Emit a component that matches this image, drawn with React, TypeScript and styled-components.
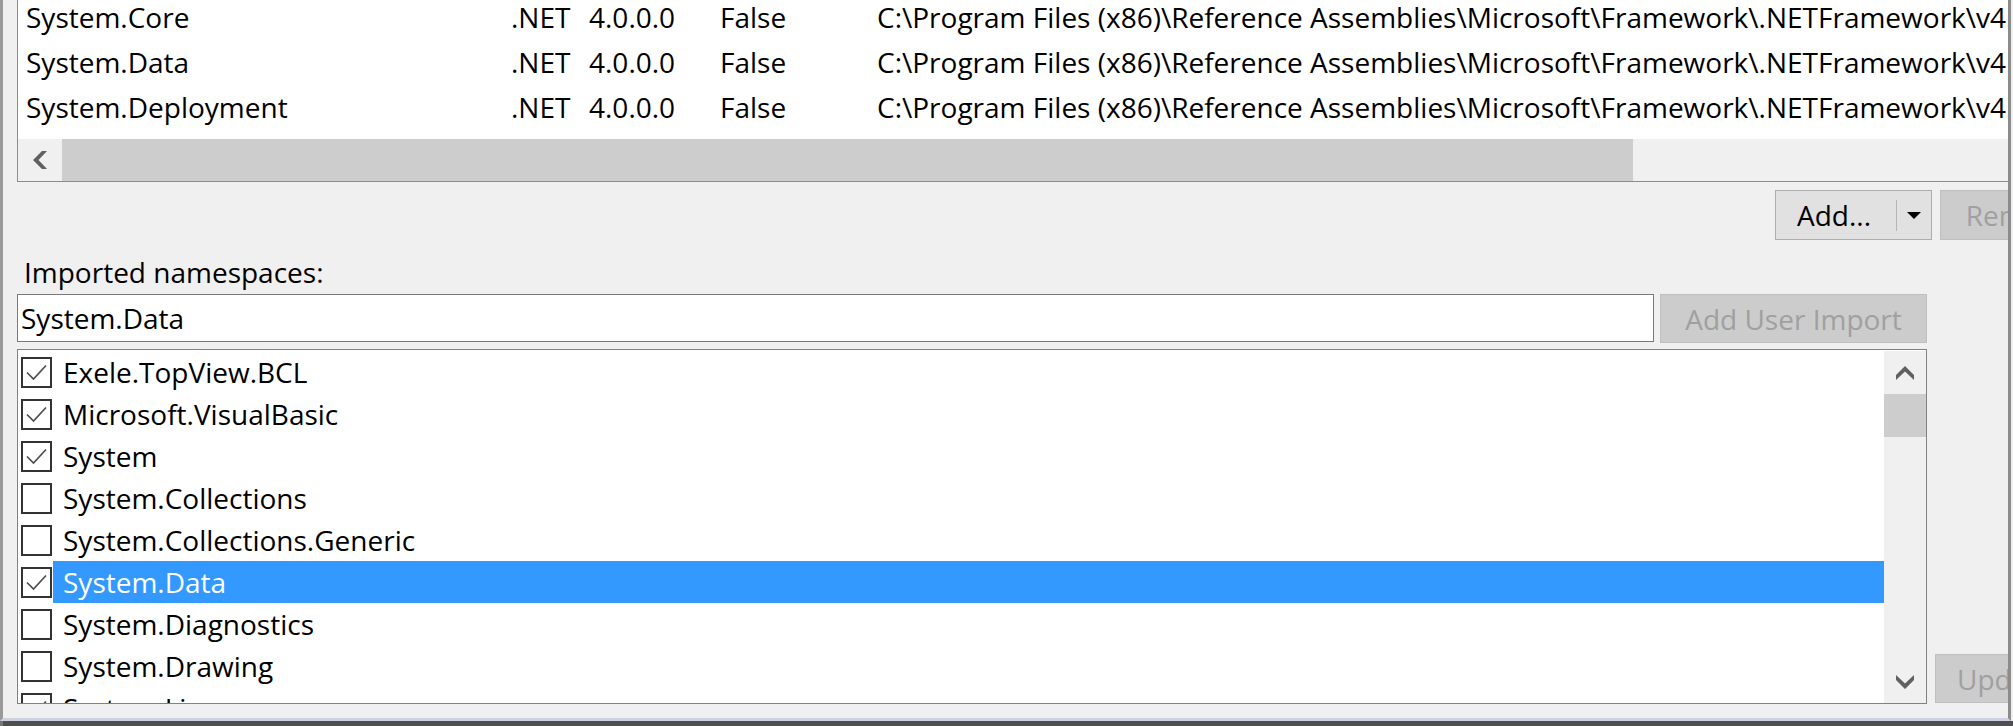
import styled, { createGlobalStyle } from "styled-components";

const GlobalStyle = createGlobalStyle`
  html, body {
    margin: 0;
    padding: 0;
    background: #f0f0f0;
    overflow: hidden;
  }
  body {
    font-family: "Segoe UI", "Open Sans", "Noto Sans", sans-serif;
  }
`;

const Screen = styled.div`
  width: 2013px;
  height: 726px;
  display: flex;
  flex-direction: column;
  background: #f0f0f0;
  overflow: hidden;
  font-size: 28px;
  color: #000;
`;

const Window = styled.div`
  flex: none;
  box-sizing: border-box;
  width: 2011px;
  height: 721px;
  background: #f0f0f0;
  border-left: 3px solid #9a9a9a;
  border-right: 3px solid #8c8c8c;
  border-bottom: 3px solid #cdd1e1;
  overflow: hidden;
`;

const BottomStrip = styled.div`
  flex: 1;
  background: #4f4f4f;
  border-left: 3px solid #777;
`;

// wider than the window on purpose: the dialog is clipped on the right
const Content = styled.div`
  box-sizing: border-box;
  width: 2094px;
  padding-left: 14px;
  display: flex;
  flex-direction: column;
`;

/* references list (top) */
const RefList = styled.div`
  margin-top: -6px;
  border: 1px solid #8c8c8c;
  background: #fff;
`;

const RefRows = styled.div`
  padding-bottom: 9px;
`;

const RefRow = styled.div`
  display: grid;
  grid-template-columns: 485px 78px 131px 157px minmax(0, 1fr);
  height: 45px;
  line-height: 45px;
  white-space: nowrap;
  & > span {
    padding-left: 8px;
  }
`;

const HScroll = styled.div`
  display: flex;
  height: 42px;
  background: #f0f0f0;
`;

const ScrollButton = styled.div<{ $h?: number }>`
  flex: none;
  width: ${(p) => (p.$h ? "100%" : "44px")};
  height: ${(p) => (p.$h ? `${p.$h}px` : "auto")};
  display: flex;
  align-items: center;
  justify-content: center;
`;

const HThumb = styled.div`
  width: 1571px;
  background: #cdcdcd;
`;

/* buttons */
const ButtonRow = styled.div`
  display: flex;
  justify-content: flex-end;
  gap: 8px;
  margin-top: 8px;
`;

const PushButton = styled.div<{ $w: number; $h?: number; $disabled?: boolean }>`
  box-sizing: border-box;
  flex: none;
  width: ${(p) => p.$w}px;
  height: ${(p) => p.$h ?? 50}px;
  display: flex;
  align-items: center;
  justify-content: center;
  white-space: nowrap;
  overflow: hidden;
  border: 1px solid ${(p) => (p.$disabled ? "#bfbfbf" : "#adadad")};
  background: ${(p) => (p.$disabled ? "#cccccc" : "#e1e1e1")};
  color: ${(p) => (p.$disabled ? "#a0a0a0" : "#000")};
`;

const SplitButton = styled(PushButton)`
  justify-content: flex-start;
  padding-left: 21px;
`;

const SplitDivider = styled.div`
  width: 1px;
  height: 31px;
  margin: 0 10px 0 25px;
  background: #b5b5b5;
`;

/* lower section */
const Lower = styled.div`
  display: grid;
  grid-template-columns: 1910px 162px;
  column-gap: 8px;
  margin-top: 13px;
`;

const FieldLabel = styled.div`
  grid-column: 1;
  line-height: 38px;
  padding-left: 7px;
`;

const InputRow = styled.div`
  grid-column: 1;
  display: flex;
  align-items: flex-start;
  gap: 6px;
  margin-top: 3px;
`;

const TextBox = styled.div`
  flex: 1;
  box-sizing: border-box;
  height: 48px;
  line-height: 46px;
  padding-left: 3px;
  border: 1px solid #7a7a7a;
  background: #fff;
`;

const CheckList = styled.div`
  grid-column: 1;
  grid-row: 3;
  box-sizing: border-box;
  height: 355px;
  margin-top: 6px;
  display: flex;
  border: 1px solid #828282;
  background: #fff;
`;

const Items = styled.div`
  flex: 1;
  padding-top: 1px;
  overflow: hidden;
`;

const Item = styled.div`
  display: flex;
  height: 42px;
`;

const BoxCell = styled.div`
  flex: none;
  box-sizing: border-box;
  width: 35px;
  padding-left: 3px;
  display: flex;
  align-items: center;
`;

const Box = styled.div`
  box-sizing: border-box;
  width: 31px;
  height: 31px;
  border: 2px solid #333;
  background: #fff;
  display: flex;
  align-items: center;
  justify-content: center;
`;

const ItemText = styled.div<{ $selected?: boolean }>`
  flex: 1;
  padding-left: 10px;
  line-height: 43px;
  white-space: nowrap;
  background: ${(p) => (p.$selected ? "#3399ff" : "transparent")};
  color: ${(p) => (p.$selected ? "#fff" : "#000")};
`;

const VScroll = styled.div`
  flex: none;
  width: 42px;
  margin-top: 1px;
  display: flex;
  flex-direction: column;
  background: #f0f0f0;
`;

const VThumb = styled.div`
  height: 43px;
  background: #cdcdcd;
`;

const VTrack = styled.div`
  flex: 1;
`;

const SideButton = styled(PushButton)`
  grid-column: 2;
  grid-row: 3;
  align-self: end;
  margin-bottom: 1px;
`;

/* drawings */
const Chevron = ({ dir }: { dir: "left" | "up" | "down" }) => {
  const rot = dir === "left" ? -90 : dir === "down" ? 180 : 0;
  return (
    <svg width="18" height="16" viewBox="0 0 18 16" style={{ transform: `rotate(${rot}deg)` }}>
      <polygon points="9,1 18,10 18,15 9,6.5 0,15 0,10" fill="#606060" />
    </svg>
  );
};

const DropArrow = () => (
  <svg width="14" height="7" viewBox="0 0 14 7">
    <polygon points="0,0 14,0 7,7" fill="#000" />
  </svg>
);

const Check = () => (
  <svg width="27" height="27" viewBox="0 0 27 27">
    <polyline points="4,13.5 10.5,20 23,6.5" fill="none" stroke="#4d4d4d" strokeWidth="1.7" />
  </svg>
);

const path = (dll: string) =>
  `C:\\Program Files (x86)\\Reference Assemblies\\Microsoft\\Framework\\.NETFramework\\v4.7.2\\${dll}.dll`;

const references = ["System.Core", "System.Data", "System.Deployment"];

const namespaces: { name: string; checked: boolean; selected?: boolean }[] = [
  { name: "Exele.TopView.BCL", checked: true },
  { name: "Microsoft.VisualBasic", checked: true },
  { name: "System", checked: true },
  { name: "System.Collections", checked: false },
  { name: "System.Collections.Generic", checked: false },
  { name: "System.Data", checked: true, selected: true },
  { name: "System.Diagnostics", checked: false },
  { name: "System.Drawing", checked: false },
  { name: "System.Linq", checked: true },
];

export default function App() {
  return (
    <>
      <GlobalStyle />
      <Screen>
        <Window>
          <Content>
            <RefList>
              <RefRows>
                {references.map((r) => (
                  <RefRow key={r}>
                    <span>{r}</span>
                    <span>.NET</span>
                    <span>4.0.0.0</span>
                    <span>False</span>
                    <span>{path(r)}</span>
                  </RefRow>
                ))}
              </RefRows>
              <HScroll>
                <ScrollButton>
                  <Chevron dir="left" />
                </ScrollButton>
                <HThumb />
              </HScroll>
            </RefList>

            <ButtonRow>
              <SplitButton $w={157}>
                <span>Add...</span>
                <SplitDivider />
                <DropArrow />
              </SplitButton>
              <PushButton $w={157} $disabled>
                Remove
              </PushButton>
            </ButtonRow>

            <Lower>
              <FieldLabel>Imported namespaces:</FieldLabel>
              <InputRow>
                <TextBox>System.Data</TextBox>
                <PushButton $w={267} $h={49} $disabled>
                  Add User Import
                </PushButton>
              </InputRow>
              <CheckList>
                <Items>
                  {namespaces.map((n) => (
                    <Item key={n.name}>
                      <BoxCell>
                        <Box>{n.checked && <Check />}</Box>
                      </BoxCell>
                      <ItemText $selected={n.selected}>{n.name}</ItemText>
                    </Item>
                  ))}
                </Items>
                <VScroll>
                  <ScrollButton $h={43}>
                    <Chevron dir="up" />
                  </ScrollButton>
                  <VThumb />
                  <VTrack />
                  <ScrollButton $h={43}>
                    <Chevron dir="down" />
                  </ScrollButton>
                </VScroll>
              </CheckList>
              <SideButton $w={162} $h={49} $disabled>
                Update...
              </SideButton>
            </Lower>
          </Content>
        </Window>
        <BottomStrip />
      </Screen>
    </>
  );
}
